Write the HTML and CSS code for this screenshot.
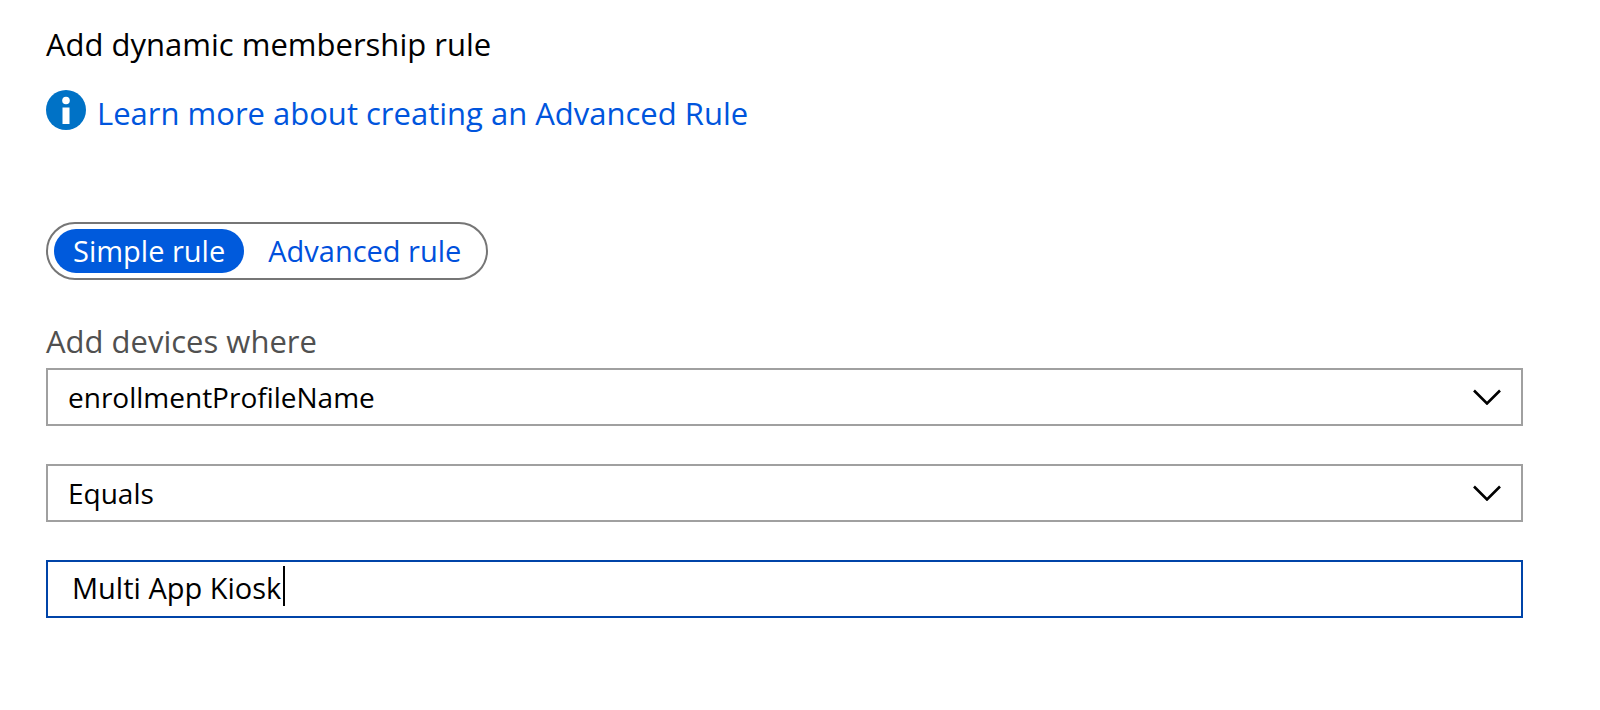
FILE: index.html
```html
<!DOCTYPE html>
<html lang="en">
<head>
    <meta charset="UTF-8">
    <meta name="viewport" content="width=device-width, initial-scale=1.0">
    <title>Dynamic membership rules</title>
    <link rel="stylesheet" href="styles.css">
</head>
<body>
    <main>
        <h1>Add dynamic membership rule</h1>
        <div class="learn-more">
            <svg class="info-icon" viewBox="0 0 40 40" aria-hidden="true">
                <circle cx="20" cy="20" r="20" fill="#0072c6"/>
                <circle cx="20" cy="10.5" r="3.8" fill="#fff"/>
                <rect x="16.5" y="17.5" width="7" height="16.5" fill="#fff"/>
            </svg>
            <a href="#">Learn more about creating an Advanced Rule</a>
        </div>

        <div class="toggle">
            <button type="button" class="active" aria-pressed="true">Simple rule</button>
            <button type="button" aria-pressed="false">Advanced rule</button>
        </div>

        <form>
            <label for="property">Add devices where</label>
            <div class="field">
                <select id="property">
                    <option>enrollmentProfileName</option>
                </select>
                <svg class="chevron" viewBox="0 0 28 16" aria-hidden="true">
                    <path d="M1 1.5L14 14.5L27 1.5" fill="none" stroke="#000" stroke-width="2.6"/>
                </svg>
            </div>
            <div class="field">
                <select id="operator" aria-label="Operator">
                    <option>Equals</option>
                </select>
                <svg class="chevron" viewBox="0 0 28 16" aria-hidden="true">
                    <path d="M1 1.5L14 14.5L27 1.5" fill="none" stroke="#000" stroke-width="2.6"/>
                </svg>
            </div>
            <div class="field">
                <input type="text" id="value" aria-label="Value" value="Multi App Kiosk">
                <span class="caret"></span>
            </div>
        </form>
    </main>
</body>
</html>
```

FILE: styles.css
```css
* {
    box-sizing: border-box;
}

body {
    margin: 0;
    font-family: 'Segoe UI', 'Open Sans', sans-serif;
    font-size: 31px;
    line-height: 44px;
    color: #000;
    background: #fff;
}

main {
    padding: 22px 77px 22px 46px;
}

h1 {
    margin: 0;
    font-size: 31px;
    font-weight: 400;
}

.learn-more {
    display: flex;
    align-items: flex-start;
    gap: 11px;
    margin-top: 24px;
}

.learn-more a {
    padding-top: 1px;
    color: #0055dd;
    text-decoration: none;
}

.info-icon {
    width: 40px;
    height: 40px;
}

/* Rule type switch */
.toggle {
    display: flex;
    gap: 5px;
    width: fit-content;
    height: 58px;
    margin-top: 87px;
    padding: 5px 6px;
    border: 2px solid #767676;
    border-radius: 29px;
}

.toggle button {
    padding: 0 19px;
    border: none;
    border-radius: 22px;
    background: none;
    color: #0050dc;
    font-family: inherit;
    font-size: 29px;
    line-height: 44px;
}

.toggle .active {
    background: #005adc;
    color: #fff;
}

label {
    display: block;
    margin: 39px 0 5px;
    color: #505050;
}

.field {
    position: relative;
    margin-bottom: 38px;
}

.field select,
.field input {
    display: block;
    width: 100%;
    height: 58px;
    padding: 0 20px;
    border: 2px solid #a0a0a0;
    border-radius: 0;
    outline: none;
    appearance: none;
    background: #fff;
    color: #000;
    font-family: inherit;
    font-size: 28px;
}

.field input {
    padding: 0 24px 4px;
    border-color: #0044a8;
    font-size: 29px;
}

.chevron {
    position: absolute;
    top: 21px;
    right: 22px;
    width: 28px;
    height: 16px;
    pointer-events: none;
}

.caret {
    position: absolute;
    top: 6px;
    left: 237px;
    width: 2px;
    height: 40px;
    background: #000;
}
```
